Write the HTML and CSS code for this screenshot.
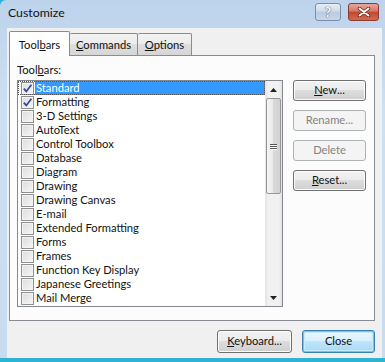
FILE: index.html
```html
<!DOCTYPE html>
<html lang="en">
<head>
    <meta charset="UTF-8">
    <title>Customize</title>
    <link rel="stylesheet" href="styles.css">
</head>
<body>
    <div class="window">
        <div class="titlebar">
            <span class="title">Customize</span>
            <div class="caption-btns">
                <div class="cap help">?</div>
                <div class="cap close">
                    <svg width="14" height="10" viewBox="0 0 14 10">
                        <path d="M2.5 1.5 L11.5 8.5 M11.5 1.5 L2.5 8.5" stroke="#5a1b14" stroke-width="3.4" stroke-linecap="round"/>
                        <path d="M2.5 1.5 L11.5 8.5 M11.5 1.5 L2.5 8.5" stroke="#fff" stroke-width="2" stroke-linecap="round"/>
                    </svg>
                </div>
            </div>
        </div>
        <div class="client">
            <div class="tabs">
                <div class="tab active">Tool<u>b</u>ars</div>
                <div class="tab tab-commands"><u>C</u>ommands</div>
                <div class="tab tab-options"><u>O</u>ptions</div>
            </div>
            <div class="panel">
                <div class="label">Tool<u>b</u>ars:</div>
                <div class="panel-body">
                    <div class="listbox">
                        <ul class="items" id="items"></ul>
                        <div class="scrollbar">
                            <div class="arrow">
                                <svg width="7" height="4" viewBox="0 0 7 4"><polygon points="0,4 7,4 3.5,0" fill="#222"/></svg>
                            </div>
                            <div class="track">
                                <div class="thumb">
                                    <div class="grip"></div>
                                    <div class="grip"></div>
                                    <div class="grip"></div>
                                </div>
                            </div>
                            <div class="arrow">
                                <svg width="7" height="4" viewBox="0 0 7 4"><polygon points="0,0 7,0 3.5,4" fill="#222"/></svg>
                            </div>
                        </div>
                    </div>
                    <div class="side-btns">
                        <div class="btn"><u>N</u>ew...</div>
                        <div class="btn disabled">Rename...</div>
                        <div class="btn disabled">Delete</div>
                        <div class="btn"><u>R</u>eset...</div>
                    </div>
                </div>
            </div>
            <div class="footer">
                <div class="btn btn-keyboard"><u>K</u>eyboard...</div>
                <div class="btn btn-close default">Close</div>
            </div>
        </div>
    </div>
    <div class="taskbar"></div>
    <script>
        const toolbars = [
            { name: "Standard", checked: true },
            { name: "Formatting", checked: true },
            { name: "3-D Settings" },
            { name: "AutoText" },
            { name: "Control Toolbox" },
            { name: "Database" },
            { name: "Diagram" },
            { name: "Drawing" },
            { name: "Drawing Canvas" },
            { name: "E-mail" },
            { name: "Extended Formatting" },
            { name: "Forms" },
            { name: "Frames" },
            { name: "Function Key Display" },
            { name: "Japanese Greetings" },
            { name: "Mail Merge" }
        ];
        const list = document.getElementById("items");
        const check = '<svg width="11" height="11" viewBox="0 0 11 11"><path d="M1.8 5.6 L4.3 8.4 L9.4 1.8" fill="none" stroke="#33449a" stroke-width="1.7"/></svg>';

        toolbars.forEach((tb, i) => {
            const li = document.createElement("li");
            if (i === 0) li.className = "selected";
            li.innerHTML = `<span class="checkbox">${tb.checked ? check : ""}</span><span class="name">${tb.name}</span>`;
            list.appendChild(li);
        });
    </script>
</body>
</html>
```

FILE: styles.css
```css
body {
    margin: 0;
    width: 385px;
    height: 362px;
    overflow: hidden;
    background: #2fb3d5;
    font-family: "Lato", "Noto Sans", sans-serif;
    font-size: 11.2px;
    color: #111;
}

.window {
    height: 358px;
    display: flex;
    flex-direction: column;
    padding: 0 3px 0 7px;
    background: linear-gradient(#bdd3ec, #cddff1 30%, #c9dbee);
    border-radius: 6px 0 0 0;
    box-sizing: border-box;
}

.titlebar {
    height: 28px;
    display: flex;
    align-items: flex-start;
    margin-left: -7px;
    padding-left: 8px;
}

.title {
    margin-top: 5px;
    line-height: 16px;
    font-size: 12.3px;
}

.caption-btns {
    margin-left: auto;
    margin-top: 3px;
    margin-right: 3px;
    display: flex;
    gap: 7px;
}

.cap {
    height: 18px;
    border-radius: 3px;
    box-sizing: border-box;
    display: flex;
    align-items: center;
    justify-content: center;
}

.help {
    width: 26px;
    border: 1px solid #7b8fa9;
    background: linear-gradient(#e6eef8, #cfdbea 45%, #b9cbe0 50%, #c6d7ea);
    color: #fff;
    font-size: 14px;
    font-weight: bold;
    line-height: 1;
    text-shadow: 0 0 1px #3c4f6b, 0 0 1px #3c4f6b;
}

.close {
    width: 31px;
    border: 1px solid #8a3a31;
    background: linear-gradient(#e8a89c, #d47868 45%, #c2472f 50%, #d06a50);
}

.client {
    flex: 1;
    background: #f0f0f0;
    display: flex;
    flex-direction: column;
    padding: 3px 7px 0 2px;
}

.tabs {
    display: flex;
    align-items: flex-end;
    height: 24px;
    position: relative;
    z-index: 1;
}

.tab {
    height: 22px;
    box-sizing: border-box;
    border: 1px solid #898c95;
    border-bottom: none;
    border-left: none;
    border-radius: 2px 2px 0 0;
    background: linear-gradient(#f3f3f3, #ebebeb 50%, #dedede 50%, #d6d6d6);
    padding-top: 3px;
    text-align: center;
    line-height: 16px;
}

.tab.active {
    width: 61px;
    height: 25px;
    margin-bottom: -1px;
    border-left: 1px solid #898c95;
    background: #fff;
    padding-top: 5px;
}

.tab-commands {
    width: 68px;
}

.tab-options {
    width: 54px;
}

.panel {
    width: 366px;
    height: 266px;
    box-sizing: border-box;
    border: 1px solid #898c95;
    background: #fcfcfc;
    padding: 6px 7px 0 7px;
}

.label {
    line-height: 16px;
    height: 18px;
}

.panel-body {
    display: flex;
    align-items: flex-start;
    gap: 10px;
}

.listbox {
    width: 266px;
    height: 227px;
    box-sizing: border-box;
    border: 1px solid #828790;
    background: #fff;
    display: flex;
}

.items {
    list-style: none;
    margin: 0;
    padding: 0;
    flex: 1;
}

.items li {
    height: 14px;
    display: flex;
    align-items: center;
}

.checkbox {
    width: 13px;
    height: 13px;
    box-sizing: border-box;
    margin-left: 3px;
    border: 1px solid #8e8f8f;
    background: linear-gradient(135deg, #dcdcdc, #f6f6f6);
    box-shadow: inset 0 0 0 1px #f4f4f4;
    display: flex;
    align-items: center;
    justify-content: center;
}

.name {
    flex: 1;
    height: 14px;
    line-height: 14px;
    padding-left: 1px;
    margin-left: 1px;
    white-space: nowrap;
}

.items li.selected {
    outline: 1px dotted #555;
    outline-offset: -1px;
}

.items li.selected .name {
    background: #3399ff;
    color: #fff;
}

.scrollbar {
    width: 17px;
    display: flex;
    flex-direction: column;
    background: linear-gradient(to right, #e3e3e3, #f1f1f1 20%, #f1f1f1 80%, #e3e3e3);
}

.arrow {
    height: 17px;
    display: flex;
    align-items: center;
    justify-content: center;
}

.track {
    flex: 1;
}

.thumb {
    margin: 0 1px;
    height: 96px;
    box-sizing: border-box;
    border: 1px solid #979797;
    border-radius: 2px;
    background: linear-gradient(to right, #f4f4f4, #e9e9e9 50%, #d9d9d9 50%, #d2d2d2);
    display: flex;
    flex-direction: column;
    align-items: center;
    justify-content: center;
    gap: 1px;
}

.grip {
    width: 7px;
    height: 1px;
    background: #555;
    box-shadow: 0 1px 0 #fff;
}

.side-btns {
    display: flex;
    flex-direction: column;
    gap: 9px;
}

.btn {
    width: 73px;
    height: 21px;
    box-sizing: border-box;
    border: 1px solid #707070;
    border-radius: 3px;
    background: linear-gradient(#f2f2f2, #ebebeb 50%, #dddddd 50%, #cfcfcf);
    box-shadow: inset 0 0 0 1px #fcfcfc;
    text-align: center;
    line-height: 18px;
}

.btn.disabled {
    border-color: #adb2b5;
    background: #f4f4f4;
    box-shadow: none;
    color: #838383;
}

.footer {
    display: flex;
    justify-content: flex-end;
    gap: 10px;
    margin-top: 9px;
}

.footer .btn {
    height: 23px;
    line-height: 20px;
}

.btn-keyboard {
    width: 75px;
}

.btn.default {
    border-color: #3c7fb1;
    box-shadow: inset 0 0 0 1px #48d8fb, inset 0 0 0 2px #c7ecf9;
    background: linear-gradient(#eaf6fd, #d9f0fc 50%, #bee6fd 50%, #a7d9f5);
}

.taskbar {
    height: 4px;
    background: #2fb3d5;
}
```
